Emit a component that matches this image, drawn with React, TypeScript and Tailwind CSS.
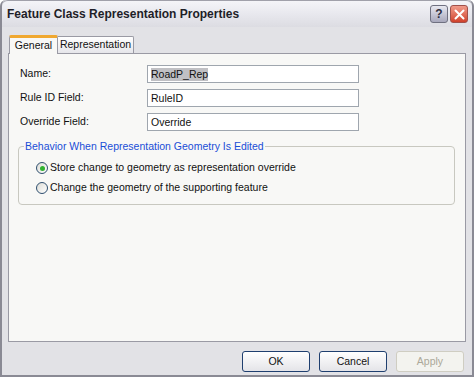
import React from 'react';

const font = { fontFamily: '"Liberation Sans", Arial, sans-serif' };

function Field({ label, value, selected }: { label: string; value: string; selected?: boolean }) {
  return (
    <div className="flex items-center h-[18px]">
      <div className="w-[127px] text-[10.5px] text-[#111]">{label}</div>
      <div className="w-[212px] h-[18px] border border-[#9fa6ae] bg-white flex items-center px-[3px]">
        <span className={`text-[10.5px] leading-[13px] text-[#111] ${selected ? 'bg-[#c0c0c4]' : ''}`}>{value}</span>
      </div>
    </div>
  );
}

function Radio({ checked, label }: { checked?: boolean; label: string }) {
  return (
    <div className="flex items-center gap-[2px] h-[14px]">
      <div className="w-[12px] h-[12px] rounded-full border border-[#2f4f6f] bg-gradient-to-br from-[#dcdcd6] to-white flex items-center justify-center">
        {checked && <div className="w-[5px] h-[5px] rounded-full bg-[#31b231]" />}
      </div>
      <span className="text-[10.5px] text-[#111]">{label}</span>
    </div>
  );
}

function Button({ label, disabled }: { label: string; disabled?: boolean }) {
  return (
    <div
      className={`w-[68px] h-[21px] rounded-[3px] border flex items-center justify-center text-[10.5px] ${
        disabled
          ? 'border-[#cfcdc2] bg-[#f3f3ef] text-[#aca899]'
          : 'border-[#1f3f6f] bg-gradient-to-b from-white to-[#e4e4e8] text-[#111]'
      }`}
    >
      {label}
    </div>
  );
}

export default function App() {
  return (
    <div className="w-[474px] h-[379px] bg-white overflow-hidden" style={font}>
      <div className="w-[474px] h-[377px] flex flex-col bg-[#e2e2e6] border-l-2 border-r-2 border-b-2 border-[#8a8a94] rounded-t-[6px]">
        {/* title bar */}
        <div className="h-[27px] flex items-center pl-[5px] pr-[4px] bg-gradient-to-b from-[#f4f4f8] via-[#e8e8ee] to-[#dcdce2] rounded-t-[6px] border-t border-[#a0a0aa]">
          <div className="flex-1 text-[12px] font-bold text-[#1e1e28]">Feature Class Representation Properties</div>
          <div className="flex gap-[2px]">
            <div className="w-[18px] h-[18px] rounded-[3px] border border-[#6f7080] bg-gradient-to-b from-[#e8e8f0] to-[#a8a8bc] flex items-center justify-center text-[12px] font-bold text-[#2e2e40]">?</div>
            <div className="w-[18px] h-[18px] rounded-[3px] border border-[#a0504a] bg-gradient-to-b from-[#f09a8a] to-[#d0402a] flex items-center justify-center">
              <svg width="11" height="11" viewBox="0 0 11 11">
                <path d="M1.5 1.5 L9.5 9.5 M9.5 1.5 L1.5 9.5" stroke="white" strokeWidth="2" strokeLinecap="round" />
              </svg>
            </div>
          </div>
        </div>

        {/* tabs */}
        <div className="px-[6px] pt-[7px] flex flex-col flex-1">
          <div className="flex items-end h-[19px] pl-[1px]">
            <div className="relative z-10 h-[19px] w-[49px] bg-[#f8f8f6] border border-b-0 border-[#9a9aa4] rounded-t-[2px] border-t-[3px] border-t-[#f0a830] flex items-center justify-center text-[10.5px] text-[#111] mb-[-1px]">
              General
            </div>
            <div className="h-[17px] w-[76px] bg-gradient-to-b from-white to-[#e6e6ea] border border-b-0 border-l-0 border-[#9a9aa4] rounded-tr-[2px] flex items-center justify-center text-[10.5px] text-[#111]">
              Representation
            </div>
          </div>
          <div className="h-[289px] bg-[#f8f8f6] border border-[#9a9aa4] flex flex-col pt-[11px] pl-[11px] pr-[7px]">
            <div className="flex flex-col gap-[6px]">
              <Field label="Name:" value="RoadP_Rep" selected />
              <Field label="Rule ID Field:" value="RuleID" />
              <Field label="Override Field:" value="Override" />
            </div>
            <div className="relative mt-[15px] ml-[-2px] w-[437px] h-[59px] border border-[#c8c8c0] rounded-[4px] pt-[14px] pl-[17px] flex flex-col gap-[6px]">
              <div className="absolute left-[5px] top-[-8px] bg-[#f8f8f6] px-[1px] text-[10.5px] text-[#1a4ed6]">
                Behavior When Representation Geometry Is Edited
              </div>
              <Radio checked label="Store change to geometry as representation override" />
              <Radio label="Change the geometry of the supporting feature" />
            </div>
          </div>

          {/* buttons */}
          <div className="flex justify-end gap-[9px] mt-[9px] pr-[2px]">
            <Button label="OK" />
            <Button label="Cancel" />
            <Button label="Apply" disabled />
          </div>
        </div>
      </div>
    </div>
  );
}
